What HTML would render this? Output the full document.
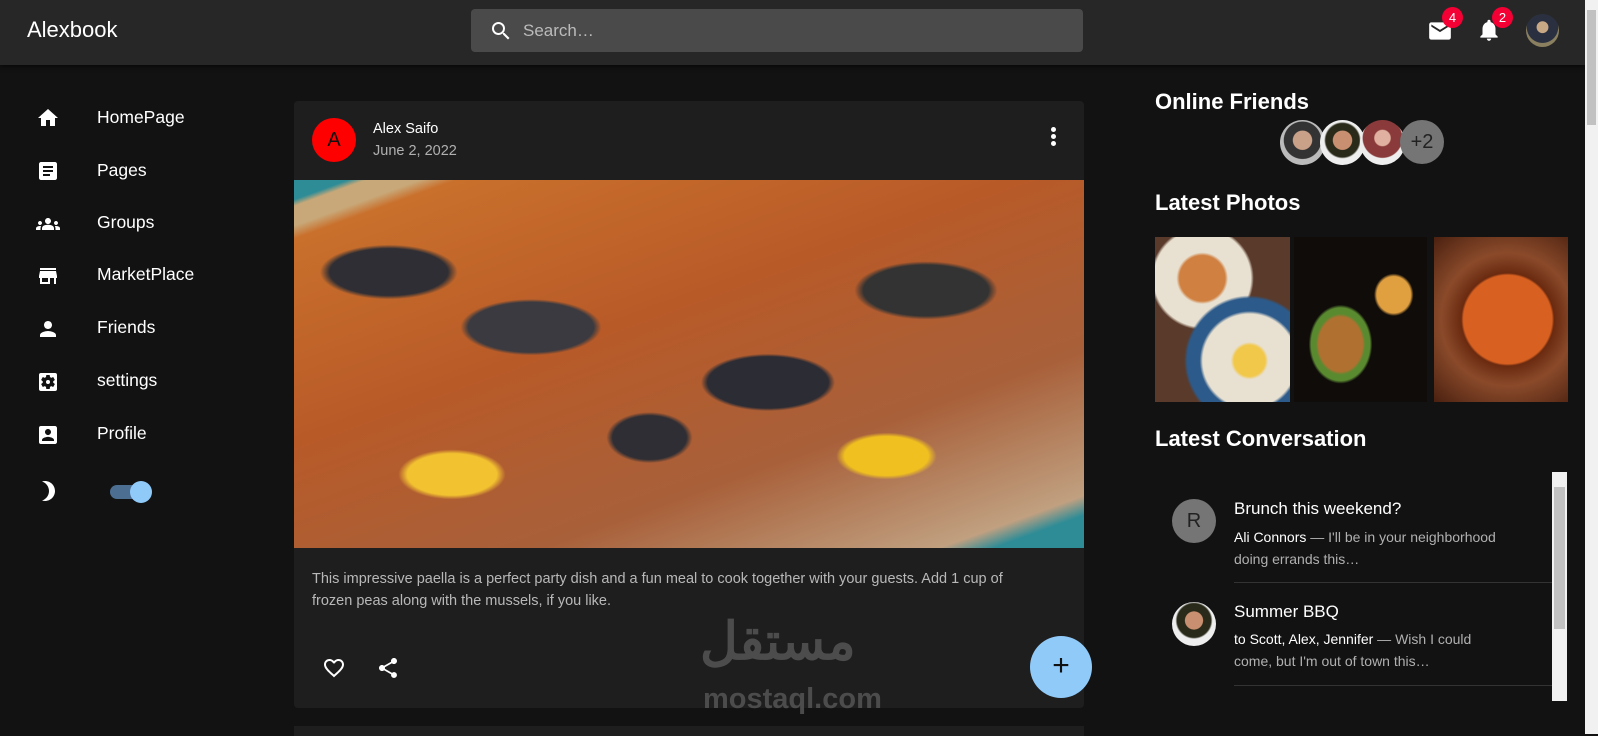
<!DOCTYPE html>
<html><head><meta charset="utf-8"><style>
*{box-sizing:border-box;margin:0;padding:0}
body{width:1598px;height:734px;overflow:hidden;background:#121212;font-family:"Liberation Sans",sans-serif;color:#fff;position:relative}
.hdr{position:absolute;left:0;top:0;width:1585px;height:65px;background:#272727;box-shadow:0 2px 4px rgba(0,0,0,.5)}
.logo{position:absolute;left:27px;top:17px;font-size:22px}
.search{position:absolute;left:471px;top:9px;width:612px;height:43px;background:#4a4a4a;border-radius:4px}
.search span{position:absolute;left:52px;top:12px;font-size:17px;color:#bbb}
.badge{position:absolute;width:21px;height:21px;border-radius:50%;background:#f50035;font-size:13px;text-align:center;line-height:21px}
.av{position:absolute;border-radius:50%}
.nav{position:absolute;left:0;top:0}
.nav div{position:absolute;left:97px;font-size:17.5px;white-space:nowrap}
.nav svg{position:absolute;left:36px;width:24px;height:24px;fill:#fff}
.card{position:absolute;left:294px;top:101px;width:790px;height:607px;background:#1e1e1e;border-radius:4px}
.sb{position:absolute;right:0;top:0;width:13px;height:734px;background:#f1f1f1}
h2{position:absolute;left:1155px;font-size:22px;font-weight:bold}
.ph{position:absolute;top:237px;height:165px}
</style></head><body>
<div class="hdr">
<div class="logo">Alexbook</div>
<div class="search"><svg style="position:absolute;left:18px;top:10px" width="24" height="24" viewBox="0 0 24 24" fill="#fff"><path d="M15.5 14h-.79l-.28-.27A6.47 6.47 0 0016 9.5 6.5 6.5 0 109.5 16c1.61 0 3.090-.59 4.23-1.57l.27.28v.79l5 4.99L20.490 19l-4.99-5zm-6 0C7.01 14 5 11.99 5 9.5S7.01 5 9.5 5 14 7.01 14 9.5 11.99 14 9.5 14z"/></svg><span>Search…</span></div>
<svg style="position:absolute;left:1427px;top:18px" width="26" height="26" viewBox="0 0 24 24" fill="#fff"><path d="M20 4H4c-1.1 0-2 .9-2 2v12c0 1.1.9 2 2 2h16c1.1 0 2-.9 2-2V6c0-1.1-.9-2-2-2zm0 4l-8 5-8-5V6l8 5 8-5v2z"/></svg>
<div class="badge" style="left:1442px;top:7px">4</div>
<svg style="position:absolute;left:1476px;top:17px" width="26" height="26" viewBox="0 0 24 24" fill="#fff"><path d="M12 22c1.1 0 2-.9 2-2h-4c0 1.1.89 2 2 2zm6-6v-5c0-3.07-1.64-5.64-4.5-6.32V4c0-.83-.67-1.5-1.5-1.5s-1.5.67-1.5 1.5v.68C7.63 5.36 6 7.920 6 11v5l-2 2v1h16v-1l-2-2z"/></svg>
<div class="badge" style="left:1492px;top:7px">2</div>
<div class="av" style="left:1526px;top:14px;width:33px;height:33px;background:radial-gradient(circle at 50% 40%,#c9a885 0 22%,#2a3040 24% 60%,#8a8060 62%)"></div>
</div>
<div class="nav">
<svg style="top:106px" viewBox="0 0 24 24"><path d="M10 20v-6h4v6h5v-8h3L12 3 2 12h3v8z"/></svg><div style="top:107px">HomePage</div>
<svg style="top:159px" viewBox="0 0 24 24"><path d="M19 3H5c-1.1 0-2 .9-2 2v14c0 1.1.9 2 2 2h14c1.1 0 2-.9 2-2V5c0-1.1-.9-2-2-2zm-5 14H7v-2h7v2zm3-4H7v-2h10v2zm0-4H7V7h10v2z"/></svg><div style="top:160px">Pages</div>
<svg style="top:212px" viewBox="0 0 24 24"><path d="M12 12.75c1.63 0 3.07.39 4.24.9 1.08.48 1.76 1.56 1.76 2.73V18H6v-1.61c0-1.18.68-2.26 1.76-2.73 1.17-.52 2.61-.91 4.24-.91zM4 13c1.1 0 2-.9 2-2s-.9-2-2-2-2 .9-2 2 .9 2 2 2zm1.13 1.1A6.98 6.98 0 004 14c-.99 0-1.930.21-2.78.58A2.01 2.01 0 000 16.43V18h4.5v-1.61c0-.83.23-1.61.63-2.29zM20 13c1.1 0 2-.9 2-2s-.9-2-2-2-2 .9-2 2 .9 2 2 2zm4 3.43c0-.81-.48-1.53-1.22-1.85A6.95 6.95 0 0020 14c-.39 0-.76.04-1.13.1.4.68.63 1.46.63 2.29V18H24v-1.57zM12 6c1.66 0 3 1.34 3 3s-1.34 3-3 3-3-1.34-3-3 1.34-3 3-3z"/></svg><div style="top:212px">Groups</div>
<svg style="top:264px" viewBox="0 0 24 24"><path d="M20 4H4v2h16V4zm1 10v-2l-1-5H4l-1 5v2h1v6h10v-6h4v6h2v-6h1zm-9 4H6v-4h6v4z"/></svg><div style="top:264px">MarketPlace</div>
<svg style="top:317px" viewBox="0 0 24 24"><path d="M12 12c2.21 0 4-1.790 4-4s-1.79-4-4-4-4 1.79-4 4 1.79 4 4 4zm0 2c-2.67 0-8 1.34-8 4v2h16v-2c0-2.66-5.33-4-8-4z"/></svg><div style="top:317px">Friends</div>
<svg style="top:370px" viewBox="0 0 24 24"><path d="M19 3H5a2 2 0 00-2 2v14a2 2 0 002 2h14a2 2 0 002-2V5a2 2 0 00-2-2zm-1.75 9c0 .23-.02.46-.05.68l1.48 1.16c.13.11.17.3.08.45l-1.4 2.42c-.09.15-.27.21-.43.15l-1.74-.7c-.36.28-.76.51-1.18.69l-.26 1.85c-.03.17-.18.3-.35.3h-2.8c-.17 0-.32-.13-.35-.29l-.26-1.85c-.43-.18-.82-.41-1.18-.69l-1.74.7c-.16.06-.34 0-.43-.15l-1.4-2.42a.35.35 0 01.08-.45l1.48-1.16c-.03-.23-.05-.46-.05-.69 0-.23.02-.46.05-.68l-1.48-1.16a.35.35 0 01-.08-.45l1.4-2.42c.09-.15.27-.21.43-.15l1.74.7c.36-.28.76-.51 1.18-.69l.26-1.85c.03-.17.18-.3.35-.3h2.8c.17 0 .32.13.35.29l.26 1.85c.43.18.82.41 1.18.69l1.74-.7c.16-.06.34 0 .43.15l1.4 2.42c.09.15.05.34-.08.45l-1.48 1.16c.03.23.05.46.05.69zM12 10a2 2 0 100 4 2 2 0 000-4z"/></svg><div style="top:370px">settings</div>
<svg style="top:423px" viewBox="0 0 24 24"><path d="M3 5v14a2 2 0 002 2h14c1.1 0 2-.9 2-2V5c0-1.1-.9-2-2-2H5a2 2 0 00-2 2zm12 4c0 1.66-1.34 3-3 3s-3-1.34-3-3 1.34-3 3-3 3 1.34 3 3zm-9 8c0-2 4-3.1 6-3.1s6 1.1 6 3.1v1H6v-1z"/></svg><div style="top:423px">Profile</div>
<svg style="top:479px" viewBox="0 0 24 24"><path d="M9 2c-1.05 0-2.05.16-3 .46 4.06 1.27 7 5.06 7 9.54 0 4.48-2.94 8.27-7 9.54.95.3 1.95.46 3 .46 5.52 0 10-4.48 10-10S14.52 2 9 2z"/></svg>
<div style="position:absolute;left:110px;top:485px;width:40px;height:14px;border-radius:7px;background:#4c6f91"></div>
<div style="position:absolute;left:130px;top:481px;width:22px;height:22px;border-radius:50%;background:#90caf9"></div>
</div>
<div class="card">
<div class="av" style="left:18px;top:17px;width:44px;height:44px;background:#f00;color:#111;font-size:20px;text-align:center;line-height:44px">A</div>
<div style="position:absolute;left:79px;top:20px;font-size:14.5px">Alex Saifo</div>
<div style="position:absolute;left:79px;top:42px;font-size:14.5px;color:#b0b0b0">June 2, 2022</div>
<div style="position:absolute;left:757px;top:26px;width:5px;height:5px;border-radius:50%;background:#fff;box-shadow:0 7px #fff,0 14px #fff"></div>
<div style="position:absolute;left:0;top:79px;width:790px;height:368px;background:radial-gradient(ellipse at 30% 40%,#3a3a40 0 8%,transparent 9%),radial-gradient(ellipse at 60% 55%,#2c2c34 0 9%,transparent 10%),radial-gradient(ellipse at 80% 30%,#333 0 7%,transparent 8%),radial-gradient(ellipse at 12% 25%,#2e2e34 0 6%,transparent 7%),radial-gradient(ellipse at 45% 70%,#2e2e34 0 6%,transparent 7%),radial-gradient(ellipse at 20% 80%,#f2c230 0 5%,transparent 6%),radial-gradient(ellipse at 75% 75%,#f0c020 0 5%,transparent 6%),linear-gradient(160deg,#2e8c96 0 3%,#c8a878 4% 7%,#c9702c 9%,#b85a28 40%,#a8603a 70%,#c0a080 92%,#2e8c96 95%)"></div>
<div style="position:absolute;left:18px;top:467px;width:722px;font-size:14.5px;line-height:22px;color:#b8b8b8">This impressive paella is a perfect party dish and a fun meal to cook together with your guests. Add 1 cup of frozen peas along with the mussels, if you like.</div>
<svg style="position:absolute;left:28px;top:555px" width="24" height="24" viewBox="0 0 24 24" fill="#fff"><path d="M16.5 3c-1.74 0-3.41.81-4.5 2.09C10.91 3.81 9.24 3 7.5 3 4.42 3 2 5.42 2 8.5c0 3.78 3.4 6.86 8.55 11.54L12 21.35l1.45-1.32C18.6 15.36 22 12.28 22 8.5 22 5.42 19.58 3 16.5 3zm-4.4 15.55l-.1.1-.1-.1C7.14 14.24 4 11.39 4 8.5 4 6.5 5.5 5 7.5 5c1.54 0 3.04.99 3.57 2.36h1.87C13.46 5.99 14.96 5 16.5 5c2 0 3.5 1.5 3.5 3.5 0 2.89-3.14 5.740-7.9 10.05z"/></svg>
<svg style="position:absolute;left:82px;top:555px" width="24" height="24" viewBox="0 0 24 24" fill="#fff"><path d="M18 16.08c-.76 0-1.44.3-1.96.77L8.91 12.7c.05-.23.09-.46.09-.7s-.04-.47-.09-.7l7.05-4.11c.54.5 1.25.81 2.04.81 1.66 0 3-1.34 3-3s-1.34-3-3-3-3 1.34-3 3c0 .24.04.47.09.7L8.04 9.81C7.5 9.31 6.79 9 6 9c-1.66 0-3 1.34-3 3s1.34 3 3 3c.79 0 1.5-.31 2.04-.81l7.12 4.16c-.05.21-.08.43-.08.65 0 1.61 1.31 2.92 2.92 2.92s2.92-1.31 2.92-2.92-1.31-2.92-2.92-2.92z"/></svg>
</div>
<div style="position:absolute;left:700px;top:612px;font-size:52px;font-weight:bold;color:#555;opacity:.85">مستقل</div>
<div style="position:absolute;left:703px;top:683px;font-size:29px;font-weight:bold;color:#555;opacity:.85">mostaql.com</div>
<div style="position:absolute;left:294px;top:726px;width:790px;height:10px;background:#1e1e1e"></div>
<div class="av" style="left:1030px;top:636px;width:62px;height:62px;background:#90caf9;color:#111;font-size:30px;text-align:center;line-height:60px">+</div>
<h2 style="top:89px">Online Friends</h2>
<div class="av" style="left:1280px;top:120px;width:45px;height:45px;background:radial-gradient(circle at 50% 45%,#c9a088 0 28%,#333 30% 55%,#bbb 57%)"></div>
<div class="av" style="left:1320px;top:120px;width:45px;height:45px;background:radial-gradient(circle at 50% 45%,#c89070 0 28%,#2a2a1a 30% 50%,#eee 55%)"></div>
<div class="av" style="left:1360px;top:120px;width:45px;height:45px;background:radial-gradient(circle at 50% 40%,#e0b0a0 0 22%,#8a3a3a 25% 55%,#eee 58%)"></div>
<div class="av" style="left:1400px;top:120px;width:44px;height:44px;background:#757575;color:#222;font-size:20px;text-align:center;line-height:44px">+2</div>
<h2 style="top:190px">Latest Photos</h2>
<div class="ph" style="left:1155px;width:135px;background:radial-gradient(circle at 70% 75%,#f2c84a 0 10%,#e8e0d0 12% 30%,#2c5a8a 32% 40%,transparent 42%),radial-gradient(circle at 35% 25%,#d08040 0 15%,#e8e0d0 17% 32%,transparent 34%),#5a3a2a"></div>
<div class="ph" style="left:1294px;width:133px;background:radial-gradient(ellipse at 35% 65%,#b07030 0 18%,#5a8a30 20% 24%,transparent 26%),radial-gradient(ellipse at 75% 35%,#e0a040 0 12%,transparent 14%),#100c0a"></div>
<div class="ph" style="left:1434px;width:134px;background:radial-gradient(circle at 55% 50%,#d86020 0 40%,#6a2a10 42%,#8a4a2a 60%,#4a2010)"></div>
<h2 style="top:426px">Latest Conversation</h2>
<div style="position:absolute;left:1155px;top:472px;width:412px;height:229px;overflow:hidden">
<div class="av" style="left:17px;top:27px;width:44px;height:44px;background:#757575;color:#222;font-size:20px;text-align:center;line-height:44px">R</div>
<div style="position:absolute;left:79px;top:27px;font-size:17px">Brunch this weekend?</div>
<div style="position:absolute;left:79px;top:54px;width:290px;font-size:14px;line-height:22px;color:#b0b0b0"><span style="color:#fff">Ali Connors</span> — I'll be in your neighborhood doing errands this…</div>
<div style="position:absolute;left:79px;top:110px;width:318px;height:1px;background:#333"></div>
<div class="av" style="left:17px;top:130px;width:44px;height:44px;background:radial-gradient(circle at 50% 42%,#c89070 0 26%,#2a2a1a 28% 50%,#eee 55%)"></div>
<div style="position:absolute;left:79px;top:130px;font-size:17px">Summer BBQ</div>
<div style="position:absolute;left:79px;top:156px;width:270px;font-size:14px;line-height:22px;color:#b0b0b0"><span style="color:#fff">to Scott, Alex, Jennifer</span> — Wish I could come, but I'm out of town this…</div>
<div style="position:absolute;left:79px;top:213px;width:318px;height:1px;background:#333"></div>
<div style="position:absolute;right:0;top:0;width:15px;height:229px;background:#f1f1f1"><div style="position:absolute;left:2px;top:15px;width:11px;height:142px;background:#c1c1c1"></div></div>
</div>
<div class="sb"><div style="position:absolute;left:2px;top:10px;width:9px;height:115px;background:#c1c1c1"></div></div>
</body></html>
